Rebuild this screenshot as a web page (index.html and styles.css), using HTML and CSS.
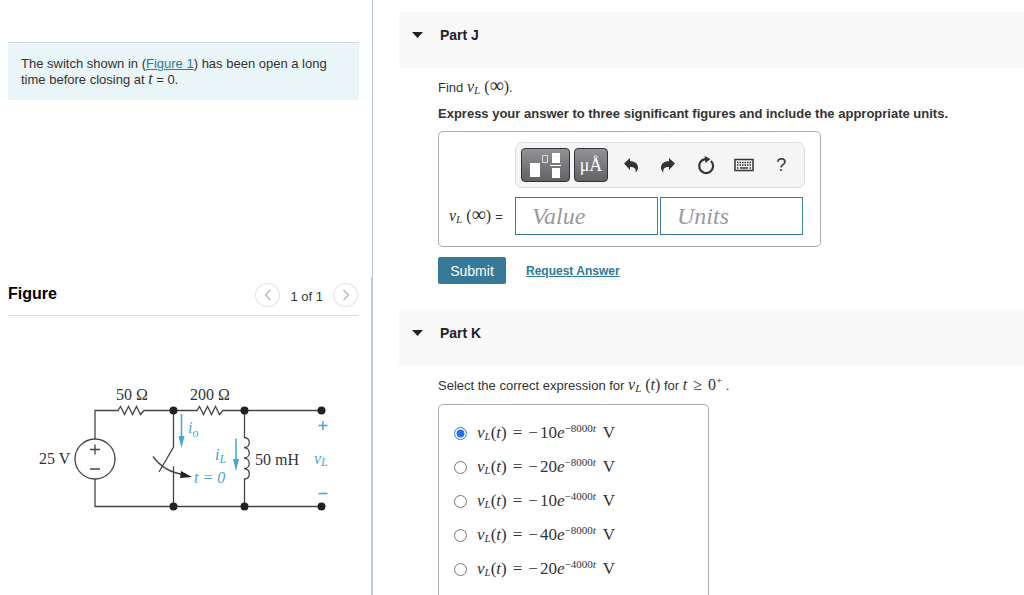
FILE: index.html
```html
<!DOCTYPE html>
<html lang="en">
<head>
<meta charset="utf-8">
<title>Circuit problem</title>
<link rel="stylesheet" href="styles.css">
</head>
<body>
<div class="layout">
  <aside class="side">
    <section class="intro">
      <p class="problem">The switch shown in (<a href="#figure">Figure 1</a>) has been open a long time before closing at <i class="var">t</i> = 0.</p>
    </section>
    <section class="figure" id="figure">
      <header class="figure-head">
        <h2>Figure</h2>
        <nav class="pager">
          <button type="button" aria-label="Previous figure"><svg width="10" height="12" viewBox="0 0 10 12"><path d="M7.500 1 2.500 6l5 5"/></svg></button>
          <span>1 of 1</span>
          <button type="button" aria-label="Next figure"><svg width="10" height="12" viewBox="0 0 10 12"><path d="M2.500 1l5 5-5 5"/></svg></button>
        </nav>
      </header>
      <svg class="circuit" width="320" height="150" viewBox="30 375 320 150" role="img" aria-label="Circuit diagram">
        <g class="wire">
          <path d="M95 439V410.500H118l2.500-4 4 8 4-8 4 8 4-8 4 8 3.500-4H197l2.500-4 4 8 4-8 4 8 4-8 4 8 3.500-4H321.500"/>
          <path d="M95 479V506.500H321.500"/>
          <circle cx="95" cy="459" r="20"/>
          <path d="M90 449.500h10M95 444.500v10M90 469h10"/>
          <path d="M173.500 410.500V447L159 472M173.500 466.500v40M153 456.500C160 466 170 473 184 474.500"/>
          <path d="M244.500 410.500V437.500C251 438 251 447.500 244 447.500C251 448 251 458 244 458C251 458.500 251 468.500 244 468.500C251 469 251 478.500 244.500 479V506.500"/>
        </g>
        <g class="node">
          <circle cx="173.500" cy="410.500" r="4"/><circle cx="244.500" cy="410.500" r="4"/><circle cx="321.500" cy="410.500" r="4"/>
          <circle cx="173.500" cy="506.500" r="4"/><circle cx="244.500" cy="506.500" r="4"/><circle cx="321.500" cy="506.500" r="4"/>
          <path d="M181 471l11 6-12 1z"/>
        </g>
        <g class="flow">
          <path class="flow-line" d="M181.500 414v24M236 438.500v22M318.500 425.500h9M323 421v9M318.500 493.500h9"/>
          <path d="M178.500 436h6l-3 12zM233 459h6l-3 12z"/>
        </g>
        <g class="label">
          <text x="116" y="400">50 Ω</text>
          <text x="190" y="400">200 Ω</text>
          <text x="39" y="464">25 V</text>
          <text x="255" y="465">50 mH</text>
        </g>
        <g class="label signal">
          <text x="188" y="433">i<tspan class="sub-label" dy="4">o</tspan></text>
          <text x="215" y="460">i<tspan class="sub-label" dy="3">L</tspan></text>
          <text x="194" y="483">t = 0</text>
          <text x="314" y="464">v<tspan class="sub-label" dy="2">L</tspan></text>
        </g>
      </svg>
    </section>
  </aside>

  <main class="main">
    <section class="part">
      <header class="part-head"><button class="toggle" type="button" aria-label="Collapse Part J"></button><h2>Part J</h2></header>
      <div class="part-body">
        <p class="ask">Find <span class="math"><i>v<sub>L</sub></i> (<span class="inf">∞</span>)</span>.</p>
        <p class="instruction">Express your answer to three significant figures and include the appropriate units.</p>
        <div class="answer">
          <div class="toolbar">
            <button class="tool dark templates" type="button" aria-label="Templates">
              <svg width="32" height="26" viewBox="0 0 32 26"><path fill="#fff" d="M0 11h10v14H0zM22 1h8v10h-8zM22 16h8v10h-8zM20 13h11v1H20z"/><path fill="none" stroke="#ddd" d="M12.500 3.500h5v7h-5z"/></svg>
            </button>
            <button class="tool dark symbols" type="button">μÅ</button>
            <button class="tool" type="button" aria-label="Undo"><svg width="16" height="16" viewBox="0 0 16 16"><path fill="#333" d="M1 6.500 7 1v3.200c5 0 8 2.300 8 6.300 0 2-.8 3.500-2.500 5 .8-4-1-5.500-5.500-5.500v3z"/></svg></button>
            <button class="tool" type="button" aria-label="Redo"><svg width="16" height="16" viewBox="0 0 16 16"><path fill="#333" d="M15 6.500 9 1v3.200c-5 0-8 2.300-8 6.300 0 2 .8 3.500 2.500 5-.8-4 1-5.500 5.500-5.500v3z"/></svg></button>
            <button class="tool" type="button" aria-label="Reset"><svg width="18" height="20" viewBox="0 0 18 20"><path fill="none" stroke="#333" stroke-width="2.200" d="M14 6A7 7 0 1 1 8 4.100"/><path fill="#333" d="M7.500 1l6 3-5 4z"/></svg></button>
            <button class="tool" type="button" aria-label="Keyboard shortcuts"><svg width="20" height="14" viewBox="0 0 20 14"><path fill="none" stroke="#333" stroke-width="1.500" d="M1 1.500h18v11H1z"/><path fill="none" stroke="#333" stroke-width="1.500" stroke-dasharray="1.500 1" d="M3 4.500h14M3 7h14"/><path stroke="#333" stroke-width="1.500" d="M3 10h1.500M6 10h8M15.500 10H17"/></svg></button>
            <button class="tool help" type="button" aria-label="Help">?</button>
          </div>
          <label class="math answer-label" for="value"><i>v<sub>L</sub></i> (<span class="inf">∞</span>) <span class="eq">=</span></label>
          <input id="value" class="field" type="text" placeholder="Value">
          <input class="field" type="text" placeholder="Units" aria-label="Units">
        </div>
        <div class="actions"><button class="submit" type="button">Submit</button><a href="#value">Request Answer</a></div>
      </div>
    </section>

    <section class="part">
      <header class="part-head"><button class="toggle" type="button" aria-label="Collapse Part K"></button><h2>Part K</h2></header>
      <div class="part-body">
        <p class="ask">Select the correct expression for <span class="math"><i>v<sub>L</sub></i> (<i>t</i>)</span> for <span class="math"><i>t</i><span class="rel">≥</span>0<sup>+</sup></span> .</p>
        <div class="options">
          <label class="option"><input type="radio" name="k" checked><span class="math"><i>v<sub>L</sub></i>(<i>t</i>)<span class="rel">=</span><span class="neg">−</span>10<i>e</i><sup>−8000<i>t</i></sup><span class="unit">V</span></span></label>
          <label class="option"><input type="radio" name="k"><span class="math"><i>v<sub>L</sub></i>(<i>t</i>)<span class="rel">=</span><span class="neg">−</span>20<i>e</i><sup>−8000<i>t</i></sup><span class="unit">V</span></span></label>
          <label class="option"><input type="radio" name="k"><span class="math"><i>v<sub>L</sub></i>(<i>t</i>)<span class="rel">=</span><span class="neg">−</span>10<i>e</i><sup>−4000<i>t</i></sup><span class="unit">V</span></span></label>
          <label class="option"><input type="radio" name="k"><span class="math"><i>v<sub>L</sub></i>(<i>t</i>)<span class="rel">=</span><span class="neg">−</span>40<i>e</i><sup>−8000<i>t</i></sup><span class="unit">V</span></span></label>
          <label class="option"><input type="radio" name="k"><span class="math"><i>v<sub>L</sub></i>(<i>t</i>)<span class="rel">=</span><span class="neg">−</span>20<i>e</i><sup>−4000<i>t</i></sup><span class="unit">V</span></span></label>
        </div>
      </div>
    </section>
  </main>
</div>
</body>
</html>
```
FILE: styles.css
```css
* { box-sizing: border-box; }
body {
  margin: 0;
  background: #fff;
  color: #333;
  font: 13px/16px "Liberation Sans", Arial, sans-serif;
}
h2, p { margin: 0; }
button { font-family: inherit; padding: 0; border: 0; background: none; }
a { color: #2c7a9c; }

.layout {
  display: grid;
  grid-template-columns: 373px 1fr;
  height: 100vh;
  overflow: hidden;
}

.side { display: grid; grid-template-rows: 277px 1fr; }
.intro {
  padding: 42px 13px 0 8px;
  border-right: 1px solid #b9c9de;
}
.problem {
  padding: 13px 12px 12px 13px;
  border-top: 1px solid #d5dcdc;
  background: #e9f5f6;
}
.var { font: italic 16px/12px "Liberation Serif", serif; }

.figure { padding: 0 13px 0 8px; border-right: 2px solid #b9c9de; }
.figure-head {
  display: flex;
  align-items: center;
  justify-content: space-between;
  height: 39px;
  border-bottom: 1px solid #dcdcdc;
}
.figure-head h2 { padding-bottom: 5px; color: #000; font-size: 16px; }
.pager { display: flex; align-items: center; gap: 10px; padding-bottom: 2px; }
.pager span { padding-top: 3px; }
.pager button {
  display: grid;
  place-items: center;
  width: 25px;
  height: 24px;
  border: 1px solid #e2e2e2;
  border-radius: 50%;
}
.pager path { fill: none; stroke: #bbb; stroke-width: 1.5; }

.circuit { display: block; margin: 59px 0 0 22px; }
.wire { fill: none; stroke: #444; stroke-width: 1.3; }
.node { fill: #222; }
.flow { fill: #45a5d8; }
.flow-line { stroke: #45a5d8; stroke-width: 1.5; }
.label { fill: #333; font: 16px "Liberation Serif", serif; }
.signal { fill: #45a5d8; font-style: italic; }
.sub-label { font-size: 12px; }

.main { padding: 12px 0 0 26px; }
.part-head {
  display: flex;
  align-items: flex-start;
  height: 56px;
  padding: 14px 13px;
  background: #f9f9f9;
}
.part-head h2 { color: #222; font-size: 14px; line-height: 18px; }
.toggle {
  width: 11px;
  height: 6px;
  margin: 6px 17px 0 0;
  background: #222;
  clip-path: polygon(0 0, 100% 0, 50% 100%);
}
.part-body { padding: 9px 39px 26px; }
.ask { line-height: 20px; }
.instruction { margin-top: 8px; font-weight: bold; }

.math { font: 16px/20px "Liberation Serif", serif; }
.math sub, .math sup { font-size: 11px; line-height: 0; }
.math sub { vertical-align: -2px; }
.math sup { vertical-align: 6px; }
.inf { font-size: 20px; line-height: 0; }
.rel { margin: 0 6px; }
.neg { margin-right: 2px; }

.answer {
  display: grid;
  grid-template-columns: 64px 143px 143px;
  column-gap: 2px;
  row-gap: 9px;
  align-items: center;
  width: 383px;
  margin-top: 9px;
  padding: 10px;
  padding-bottom: 11px;
  border: 1px solid #aaa;
  border-radius: 5px;
}
.toolbar {
  display: flex;
  grid-column: 2 / 4;
  align-items: center;
  width: 290px;
  height: 46px;
  padding: 0 4px 0 5px;
  border: 1px solid #ddd;
  border-radius: 7px;
  background: #f5f5f5;
}
.tool {
  display: grid;
  flex: 1;
  place-items: center;
  height: 34px;
  color: #333;
}
.dark {
  flex: none;
  margin-right: 4px;
  border: 1px solid #333;
  border-radius: 4px;
  background: linear-gradient(#929297, #626265);
  color: #fff;
}
.templates { width: 49px; }
.symbols { width: 34px; font: 18px "Liberation Serif", serif; }
.help { font-size: 18px; }
.answer-label { white-space: nowrap; }
.eq { font: 13px "Liberation Sans", sans-serif; }
.field {
  width: 100%;
  height: 38px;
  padding: 0 16px;
  border: 1px solid #397f9f;
  border-radius: 0;
  font: italic 24px "Liberation Serif", serif;
}
.field::placeholder { color: #999; opacity: 1; }

.actions { display: flex; align-items: center; gap: 20px; margin-top: 10px; }
.submit {
  width: 68px;
  height: 27px;
  border-radius: 2px;
  background: #367998;
  color: #fff;
  font-size: 14px;
}
.actions a { font-size: 12px; font-weight: bold; }

.options {
  width: 271px;
  margin-top: 8px;
  padding: 11px 15px 24px;
  border: 1px solid #aaa;
  border-radius: 5px;
}
.option { display: flex; align-items: center; height: 34px; }
.option input { width: 13px; height: 13px; margin: 0 10px 0 0; accent-color: #2872f0; }
.option .math { font-size: 17px; }
.unit { margin-left: 7px; }
```
